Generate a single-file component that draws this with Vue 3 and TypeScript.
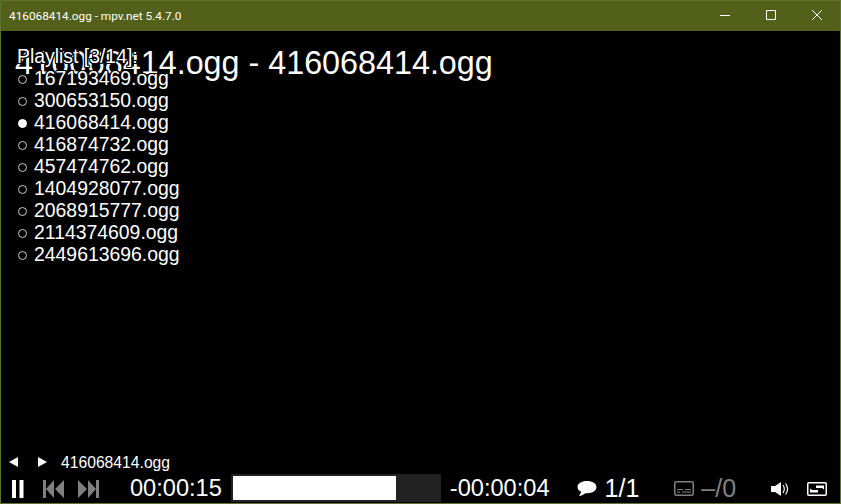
<script setup lang="ts">
const name = '416068414.ogg'
const files: { label: string; current: boolean }[] = [
  { label: '167193469.ogg', current: false },
  { label: '300653150.ogg', current: false },
  { label: '416068414.ogg', current: true },
  { label: '416874732.ogg', current: false },
  { label: '457474762.ogg', current: false },
  { label: '1404928077.ogg', current: false },
  { label: '2068915777.ogg', current: false },
  { label: '2114374609.ogg', current: false },
  { label: '2449613696.ogg', current: false },
]
</script>

<template>
  <div class="window">
    <header class="titlebar">
      <span class="wintitle">{{ name }} - mpv.net 5.4.7.0</span>
      <div class="caption">
        <span class="capbtn"><svg width="12" height="12" viewBox="0 0 12 12"><path d="M1 6.500h10" stroke="#fff" fill="none" /></svg></span>
        <span class="capbtn"><svg width="12" height="12" viewBox="0 0 12 12"><path d="M1.500 1.500h9v9h-9z" stroke="#fff" fill="none" /></svg></span>
        <span class="capbtn"><svg width="12" height="12" viewBox="0 0 12 12"><path d="M1 1l10 10M11 1L1 11" stroke="#fff" fill="none" /></svg></span>
      </div>
    </header>
    <main class="video">
      <div class="media-title">{{ name }} - {{ name }}</div>
      <section class="playlist">
        <div class="pl-head">Playlist [3/14]:</div>
        <div v-for="f in files" :key="f.label" class="pl-row">
          <span class="dot" :class="{ on: f.current }"></span>
          <span class="pl-name">{{ f.label }}</span>
        </div>
      </section>
    </main>
    <div class="topbar">
      <svg class="arrow left" width="9" height="10" viewBox="0 0 9 10"><path d="M9 0v10L0 5z" fill="#fff" /></svg>
      <svg class="arrow right" width="9" height="10" viewBox="0 0 9 10"><path d="M0 0v10l9-5z" fill="#fff" /></svg>
      <span class="file">{{ name }}</span>
    </div>
    <footer class="controls">
      <svg class="pause" width="12" height="18" viewBox="0 0 12 18"><path d="M0 0h4v18H0zM7.500 0h4v18h-4z" fill="#fff" /></svg>
      <svg class="skip prev" width="21" height="18" viewBox="0 0 21 18"><path d="M0 0h3v18H0zM11 0v18L3 9zM21 0v18L12 9z" fill="#808080" /></svg>
      <svg class="skip next" width="21" height="18" viewBox="0 0 21 18"><path d="M0 0v18l9-9zM10 0v18l8-9zM18 0h3v18h-3z" fill="#808080" /></svg>
      <span class="time elapsed">00:00:15</span>
      <div class="seek"><div class="seek-fill" :style="{ width: '79.100%' }"></div></div>
      <span class="time remain">-00:00:04</span>
      <svg class="bubble" width="20" height="15" viewBox="0 0 20 15"><path d="M10 0C4.500 0 .5 2.500 .5 6c0 2 1.300 3.600 3.500 4.600C3.800 12.300 3 13.800 1.800 15c2.900-.3 5-1.500 6.500-2.800.6.100 1.100.1 1.700.1 5.500 0 9.500-2.600 9.500-6.200S15.500 0 10 0z" fill="#fff" /></svg>
      <span class="count">1/1</span>
      <svg class="subs" width="20" height="15" viewBox="0 0 20 15"><rect x=".75" y=".75" width="18.500" height="13.500" rx="1.500" fill="none" stroke="#808080" stroke-width="1.500" /><path d="M3 8.500h6M11 8.500h6M3 11h3M8 11h9" stroke="#808080" fill="none" /></svg>
      <span class="count muted">–/0</span>
      <svg class="vol" width="18" height="14" viewBox="0 0 18 14"><path d="M0 4h4l6-4v14l-6-4H0z" fill="#fff" /><path d="M12 3c1.500 2.300 1.500 5.700 0 8M14.500 1.500c2.500 3.300 2.500 7.700 0 11" fill="none" stroke="#fff" stroke-width="1.200" /></svg>
      <svg class="fs" width="20" height="14" viewBox="0 0 20 14"><rect x=".75" y=".75" width="18.500" height="12.500" rx="1" fill="none" stroke="#fff" stroke-width="1.500" /><path d="M9 3.500h8v4l-2-1.500H9zM11 10.500H3v-4l2 1.500h6z" fill="#fff" /></svg>
    </footer>
  </div>
</template>

<style scoped>
.window {
  width: 841px;
  height: 504px;
  box-sizing: border-box;
  display: flex;
  flex-direction: column;
  background: #000;
  color: #fff;
  border: 1px solid #5f7330;
  font-family: "Liberation Sans", Arial, sans-serif;
  overflow: hidden;
}
.titlebar {
  height: 30px;
  box-sizing: border-box;
  flex: none;
  display: flex;
  align-items: center;
  justify-content: space-between;
  background: #52601a;
  padding: 0 0 2px 8px;
}
.wintitle {
  font-family: Roboto, "Noto Sans", sans-serif;
  font-size: 11.800px;
  color: #fff;
  margin-top: 1px;
}
.caption { display: flex; height: 100%; }
.capbtn {
  width: 46px;
  display: flex;
  align-items: center;
  justify-content: center;
}
.video {
  flex: 1;
  position: relative;
  min-height: 0;
}
.media-title {
  position: absolute;
  left: 14px;
  top: 13px;
  font-size: 32.300px;
  line-height: 38px;
  white-space: nowrap;
}
.playlist {
  position: absolute;
  left: 16px;
  top: 14px;
  font-size: 19.400px;
  line-height: 22px;
  text-shadow: -1px 0 0 #000, 1px 0 0 #000, 0 -1px 0 #000, 0 1px 0 #000, -1px -1px 0 #000, 1px 1px 0 #000, -1px 1px 0 #000, 1px -1px 0 #000;
}
.pl-row { display: flex; align-items: center; }
.dot {
  width: 9px;
  height: 9px;
  box-sizing: border-box;
  border: 1px solid #ccc;
  border-radius: 50%;
  margin: 2px 7px 0 1px;
}
.dot.on { background: #fff; border-color: #fff; }
.topbar {
  flex: none;
  height: 20px;
  margin-bottom: 1px;
  display: flex;
  align-items: center;
  padding-left: 8px;
  font-size: 15.700px;
}
.arrow { margin-top: -2px; }
.right { margin-left: 20px; }
.file { margin-left: 14px; }
.controls {
  flex: none;
  height: 29px;
  display: flex;
  align-items: center;
}
.pause { margin-left: 11px; }
.prev { margin-left: 19px; }
.next { margin-left: 14px; }
.time { font-size: 23.600px; white-space: nowrap; }
.elapsed { margin-left: 31px; }
.seek {
  margin-left: 9px;
  width: 210px;
  height: 28px;
  background: #222;
  box-sizing: border-box;
  padding: 2px;
  align-self: flex-start;
}
.seek-fill { height: 24px; background: #fff; }
.remain { margin-left: 9px; }
.bubble { margin-left: 27px; }
.count { font-size: 25px; margin-left: 8px; }
.subs { margin-left: 35px; }
.muted { color: #808080; margin-left: 7px; }
.vol { margin-left: 35px; }
.fs { margin-left: 18px; }
</style>

<style>
html, body { background: #000; }
</style>
